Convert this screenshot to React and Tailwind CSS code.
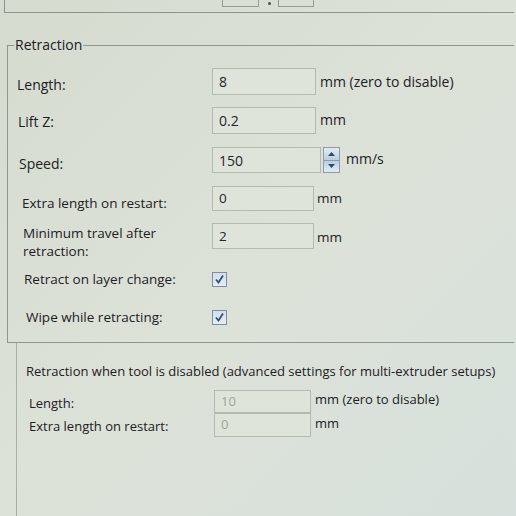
import React from 'react';

const font = { fontFamily: '"Open Sans", "Liberation Sans", sans-serif' };

const Field = ({ value, w = 'w-[104px]', h = 'h-[27px]', muted = false }) => (
  <div
    className={`${w} ${h} shrink-0 border border-[#b3bab0] bg-[#dfe4da] flex items-center pl-[6px] ${
      muted ? 'text-[#9ca39b]' : 'text-[#22262a]'
    }`}
  >
    {value}
  </div>
);

const Check = () => (
  <div className="w-[15px] h-[15px] border border-[#7c8ea6] bg-gradient-to-b from-[#d3dfe6] to-[#e6edef] flex items-center justify-center">
    <svg width="11" height="11" viewBox="0 0 11 11">
      <path d="M2 5.5 L4.5 8.5 L9 1.5" fill="none" stroke="#2b4f86" strokeWidth="1.8" />
    </svg>
  </div>
);

const Spinner = () => (
  <div className="w-[17px] h-[26px] ml-[2px] flex flex-col border border-[#8a9bb0]">
    <div className="flex-1 bg-gradient-to-b from-[#e3ecf4] to-[#bccde0] flex items-center justify-center border-b border-[#8a9bb0]">
      <svg width="7" height="4" viewBox="0 0 7 4"><path d="M0 4 L3.5 0 L7 4Z" fill="#2f4a6e" /></svg>
    </div>
    <div className="flex-1 bg-gradient-to-b from-[#bccde0] to-[#e3ecf4] flex items-center justify-center">
      <svg width="7" height="4" viewBox="0 0 7 4"><path d="M0 0 L3.5 4 L7 0Z" fill="#2f4a6e" /></svg>
    </div>
  </div>
);

export default function App() {
  return (
    <div
      style={font}
      className="w-[516px] h-[516px] overflow-hidden bg-gradient-to-br from-[#d6dbd0] via-[#dde2d8] to-[#d7e0dc] text-[#1c2024]"
    >
      {/* previous group, cut off at top */}
      <div className="ml-[4px] mr-[2px] h-[13px] border-l border-b border-[#8c948c] flex items-start">
        <div className="ml-[217px] w-[37px] h-[7px] border border-t-0 border-[#949c94]" />
        <div className="ml-[9px] mt-[2px] w-[3px] h-[3px] rounded-full bg-[#4a514b]" />
        <div className="ml-[7px] w-[36px] h-[7px] border border-t-0 border-[#949c94]" />
      </div>

      <fieldset className="mt-[24px] ml-[7px] mr-[2px] border border-r-0 border-[#8e968e] pb-[17px]">
        <legend className="ml-[6px] px-[1px] text-[14px] leading-[16px]">Retraction</legend>

        <div className="mt-[15px] flex items-center h-[27px] text-[14px]">
          <div className="w-[204px] pl-[9px] pt-[5px]">Length:</div>
          <Field value="8" />
          <div className="ml-[4px]">mm (zero to disable)</div>
        </div>

        <div className="mt-[12px] flex items-center h-[27px] text-[14px]">
          <div className="w-[204px] pl-[10px] pt-[2px]">Lift Z:</div>
          <Field value="0.2" />
          <div className="ml-[4px] -mt-[2px]">mm</div>
        </div>

        <div className="mt-[13px] flex items-center h-[26px] text-[14px]">
          <div className="w-[204px] pl-[11px] pt-[6px]">Speed:</div>
          <Field value="150" w="w-[109px]" h="h-[26px]" />
          <Spinner />
          <div className="ml-[6px] -mt-[4px]">mm/s</div>
        </div>

        <div className="mt-[13px] flex items-center h-[25px] text-[13.5px]">
          <div className="w-[204px] pl-[14px] pt-[9px]">Extra length on restart:</div>
          <Field value="0" w="w-[102px]" h="h-[25px]" />
          <div className="ml-[3px]">mm</div>
        </div>

        <div className="mt-[12px] flex items-start text-[13.5px]">
          <div className="w-[204px] pl-[15px] pt-[1px] leading-[18px]">
            Minimum travel after
            <br />
            retraction:
          </div>
          <Field value="2" w="w-[102px]" h="h-[26px]" />
          <div className="ml-[3px] mt-[4px]">mm</div>
        </div>

        <div className="mt-[11px] flex items-center h-[16px] text-[13.5px]">
          <div className="w-[204px] pl-[16px]">Retract on layer change:</div>
          <Check />
        </div>

        <div className="mt-[22px] flex items-center h-[16px] text-[13.5px]">
          <div className="w-[204px] pl-[18px]">Wipe while retracting:</div>
          <Check />
        </div>
      </fieldset>

      <div className="ml-[16px] border-l border-[#a7afa7] h-[200px] text-[13px]">
        <div className="pt-[19px] pl-[9px] leading-[18px]">
          Retraction when tool is disabled (advanced settings for multi-extruder setups)
        </div>

        <div className="mt-[10px] flex items-center h-[23px]">
          <div className="w-[197px] pl-[12px] pt-[5px]">Length:</div>
          <Field value="10" w="w-[97px]" h="h-[23px]" muted />
          <div className="ml-[4px] -mt-[3px]">mm (zero to disable)</div>
        </div>

        <div className="flex items-center h-[24px]">
          <div className="w-[197px] pl-[12px] pt-[4px]">Extra length on restart:</div>
          <Field value="0" w="w-[97px]" h="h-[24px]" muted />
          <div className="ml-[4px] -mt-[3px]">mm</div>
        </div>
      </div>
    </div>
  );
}
